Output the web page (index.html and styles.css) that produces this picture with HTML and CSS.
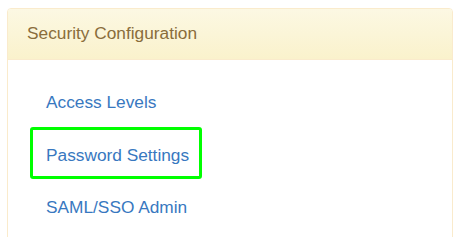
FILE: index.html
```html
<!DOCTYPE html>
<html lang="en">
<head>
  <meta charset="UTF-8">
  <meta name="viewport" content="width=device-width, initial-scale=1.0">
  <title>Security Configuration</title>
  <link rel="stylesheet" href="styles.css">
</head>
<body>
  <div class="panel">
    <div class="panel-heading">Security Configuration</div>
    <div class="panel-body">
      <ul class="menu">
        <li><a href="javascript:void(0);">Access Levels</a></li>
        <li class="active"><a href="javascript:void(0);">Password Settings</a></li>
        <li><a href="javascript:void(0);">SAML/SSO Admin</a></li>
      </ul>
    </div>
  </div>
</body>
</html>
```

FILE: styles.css
```css
body, html {
  margin: 0;
  padding: 0;
  background: #fff;
}
body {
  padding: 8px 8px 0 7px;
  font-family: "Liberation Sans", Arial, sans-serif;
  font-size: 17.3px;
}
a {
  text-decoration: none;
  color: #3878c0;
}
.panel {
  height: 400px;
  border: 1px solid #faebcc;
  border-radius: 4px;
  background-color: #fff;
}
.panel-heading {
  padding: 13.5px 19px 16px;
  line-height: 20px;
  color: #8a6d3b;
  background: linear-gradient(to bottom, #fcf8e3 0%, #faf2cc 100%);
  border-bottom: 1px solid #faebcc;
  border-radius: 3px 3px 0 0;
}
.panel-body {
  padding: 14.5px 22px 0;
}
.menu {
  margin: 0;
  padding: 0;
  list-style: none;
}
.menu li {
  width: fit-content;
  padding: 15px 10px 11.5px 13px;
  line-height: 20px;
  border: 3px solid transparent;
  border-radius: 3px;
}
.menu li.active {
  border-color: #00ff00;
}
```
